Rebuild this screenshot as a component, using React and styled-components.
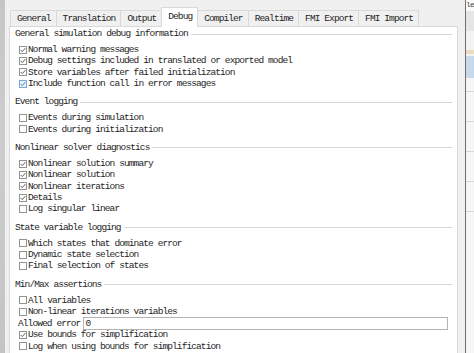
import React from "react";
import styled, { createGlobalStyle } from "styled-components";

const Global = createGlobalStyle`
  html, body { margin: 0; padding: 0; background: #f0f0f0; overflow: hidden; }
  * { box-sizing: border-box; }
`;

const FONT = `"Liberation Mono", "DejaVu Sans Mono", monospace`;

const Screen = styled.div`
  display: flex;
  width: 474px;
  height: 353px;
  overflow: hidden;
  font-family: ${FONT};
  font-size: 9.5px;
  letter-spacing: -0.9px;
  color: #1e1e1e;
`;

const LeftStrip = styled.div`
  width: 5px;
  flex: none;
  background: linear-gradient(to bottom, #c6c6c6, #cdcdcd 40%, #c4c4c4);
`;

const Dialog = styled.div`
  flex: 1;
  display: flex;
  flex-direction: column;
  padding: 8px 7px 0 4px;
  background: #f0f0f0;
  min-width: 0;
`;

const TabBar = styled.div`
  display: flex;
  align-items: flex-end;
  height: 19px;
  padding-left: 1px;
  position: relative;
  z-index: 1;
  margin-bottom: -1px;
`;

const Tab = styled.div`
  height: ${(p) => (p.$active ? 20 : 17)}px;
  padding: 0 5px 0 6px;
  margin-left: -1px;
  border: 1px solid #d9d9d9;
  border-bottom: ${(p) => (p.$active ? "none" : "1px solid #d9d9d9")};
  background: ${(p) => (p.$active ? "#ffffff" : "#f0f0f0")};
  line-height: ${(p) => (p.$active ? 17 : 15)}px;
  white-space: nowrap;
  &:first-child { margin-left: 0; }
`;

const Panel = styled.div`
  flex: 1;
  background: #ffffff;
  border: 1px solid #d9d9d9;
  border-bottom: none;
  padding: 2px 4px 0 0;
`;

const Group = styled.div`
  margin-bottom: 8px;
`;

const Heading = styled.div`
  display: flex;
  align-items: center;
  height: 10px;
  line-height: 10px;
  padding-left: 5px;
  white-space: nowrap;
  &::after {
    content: "";
    flex: 1;
    height: 1px;
    background: #d7d7d7;
    margin-left: 3px;
    margin-right: 1px;
  }
`;

const Items = styled.div`
  padding-top: 5px;
`;

const Item = styled.div`
  display: flex;
  align-items: center;
  height: 11.33px;
  padding-left: 9px;
  white-space: nowrap;
`;

const Box = styled.span`
  width: 8px;
  height: 8px;
  flex: none;
  margin-right: 1px;
  border: 1px solid ${(p) => (p.$focus ? "#7aa7d6" : "#939393")};
  background: ${(p) => (p.$focus ? "#eaf3fc" : "#ffffff")};
  display: flex;
  align-items: center;
  justify-content: center;
`;

const FieldRow = styled.div`
  display: flex;
  align-items: center;
  height: 12px;
  padding-left: 8px;
  white-space: nowrap;
`;

const Field = styled.div`
  flex: 1;
  height: 13px;
  margin-left: 3px;
  margin-right: 5px;
  border: 1px solid #b4b4b4;
  background: #fff;
  line-height: 11px;
  padding-left: 1px;
`;

const RightStrip = styled.div`
  width: 9px;
  flex: none;
  border-left: 1px solid #707070;
  background: #f6f6f6;
  display: flex;
  flex-direction: column;
  font-size: 8px;
  color: #444;
`;

const StripBlock = styled.div`
  height: ${(p) => p.$h}px;
  flex: none;
  background: ${(p) => p.$bg};
  border-bottom: ${(p) => (p.$line ? "1px solid #d8d8d8" : "none")};
  overflow: hidden;
  line-height: 10px;
`;

function Check({ checked, focus }) {
  return (
    <Box $focus={focus}>
      {checked && (
        <svg width="6" height="6" viewBox="0 0 6 6">
          <path d="M0.6 2.9 L2.3 4.6 L5.4 1.1" fill="none" stroke={focus ? "#3a6ea5" : "#4a4a4a"} strokeWidth="0.9" />
        </svg>
      )}
    </Box>
  );
}

const tabs = ["General", "Translation", "Output", "Debug", "Compiler", "Realtime", "FMI Export", "FMI Import"];

const groups = [
  {
    title: "General simulation debug information",
    items: [
      ["Normal warning messages", true],
      ["Debug settings included in translated or exported model", true],
      ["Store variables after failed initialization", true],
      ["Include function call in error messages", true, true],
    ],
  },
  {
    title: "Event logging",
    items: [
      ["Events during simulation", false],
      ["Events during initialization", false],
    ],
  },
  {
    title: "Nonlinear solver diagnostics",
    items: [
      ["Nonlinear solution summary", true],
      ["Nonlinear solution", true],
      ["Nonlinear iterations", true],
      ["Details", true],
      ["Log singular linear", false],
    ],
  },
  {
    title: "State variable logging",
    items: [
      ["Which states that dominate error", false],
      ["Dynamic state selection", false],
      ["Final selection of states", false],
    ],
  },
];

function CheckItem({ label, checked, focus }) {
  return (
    <Item>
      <Check checked={checked} focus={focus} />
      <span>{label}</span>
    </Item>
  );
}

export default function App() {
  return (
    <>
      <Global />
      <Screen>
        <LeftStrip />
        <Dialog>
          <TabBar>
            {tabs.map((t) => (
              <Tab key={t} $active={t === "Debug"}>
                {t}
              </Tab>
            ))}
          </TabBar>
          <Panel>
            {groups.map((g) => (
              <Group key={g.title}>
                <Heading>{g.title}</Heading>
                <Items>
                  {g.items.map(([label, checked, focus]) => (
                    <CheckItem key={label} label={label} checked={checked} focus={focus} />
                  ))}
                </Items>
              </Group>
            ))}
            <Group>
              <Heading>Min/Max assertions</Heading>
              <Items>
                <CheckItem label="All variables" checked={false} />
                <CheckItem label="Non-linear iterations variables" checked={false} />
                <FieldRow>
                  <span>Allowed error</span>
                  <Field>0</Field>
                </FieldRow>
                <CheckItem label="Use bounds for simplification" checked />
                <CheckItem label="Log when using bounds for simplification" checked={false} />
              </Items>
            </Group>
          </Panel>
        </Dialog>
        <RightStrip>
          <StripBlock $h={11} $bg="#fafafa">le</StripBlock>
          <StripBlock $h={20} $bg="#e6e6e6" />
          <StripBlock $h={19} $bg="#f3f3f3" />
          <StripBlock $h={4} $bg="#e9dcc0" />
          <StripBlock $h={2} $bg="#f3f3f3" />
          <StripBlock $h={22} $bg="#c9d9ec" />
          <StripBlock $h={14} $bg="#f6f6f6" $line />
          <StripBlock $h={30} $bg="#f6f6f6" $line />
          <StripBlock $h={30} $bg="#f6f6f6" $line />
          <StripBlock $h={30} $bg="#f6f6f6" $line />
          <StripBlock $h={30} $bg="#f6f6f6" $line />
          <StripBlock $h={141} $bg="#f6f6f6" />
        </RightStrip>
      </Screen>
    </>
  );
}
